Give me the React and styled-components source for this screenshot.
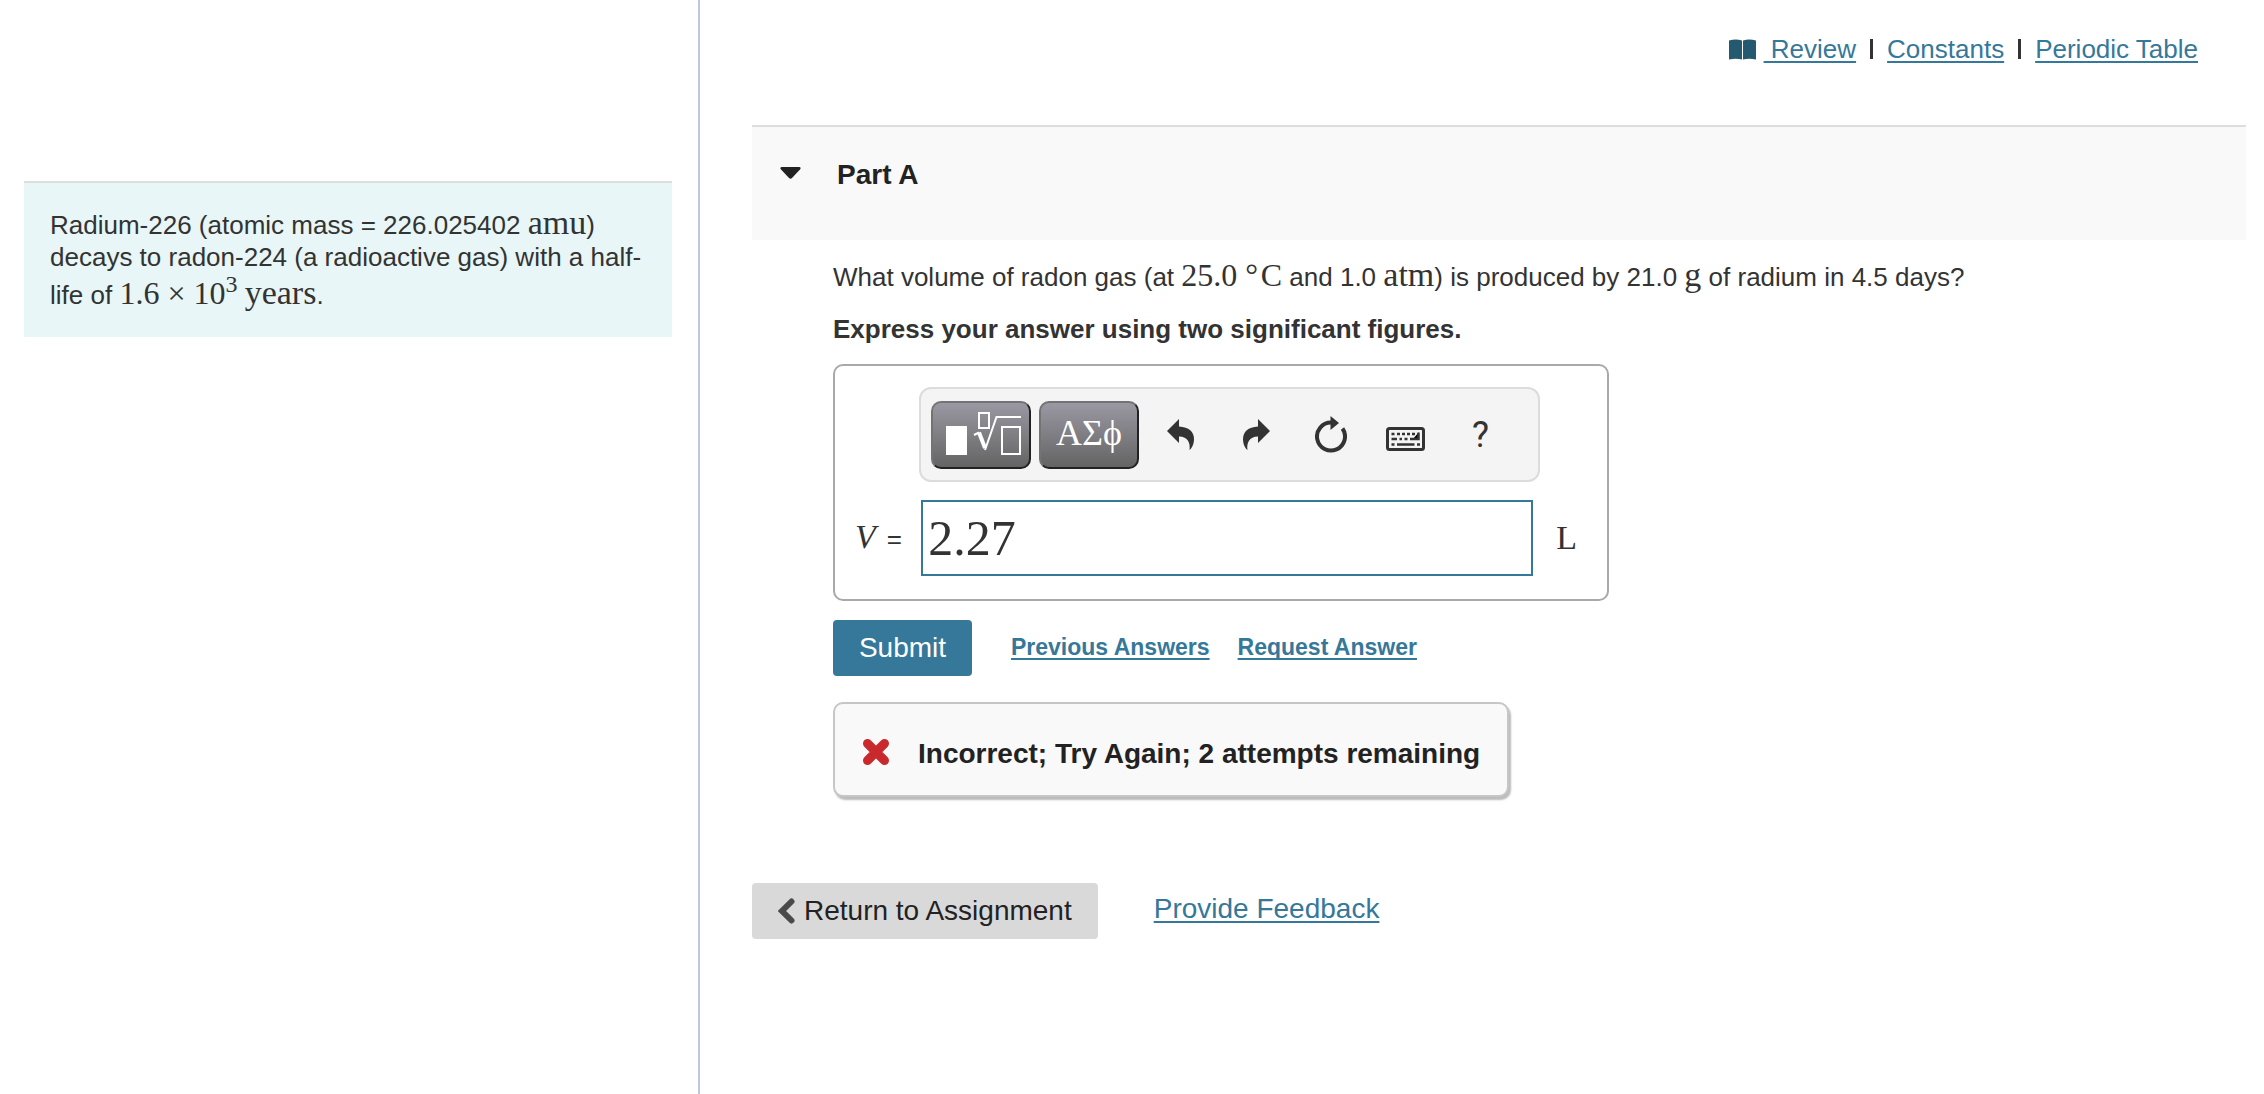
import React, { useState } from 'react';
import styled, { createGlobalStyle } from 'styled-components';

const GlobalStyle = createGlobalStyle`
  * {
    box-sizing: border-box;
  }
  body {
    margin: 0;
    background: #fff;
    color: #333;
    font-family: 'Liberation Sans', Arial, sans-serif;
    font-size: 26px;
    line-height: 32px;
  }
  button, input {
    font-family: inherit;
  }
`;

const Page = styled.div`
  display: grid;
  grid-template-columns: minmax(0, 700fr) minmax(0, 1564fr);
  min-height: 100vh;
`;

const Sidebar = styled.aside`
  padding: 181px 26px 0 24px;
  border-right: 2px solid #bccbdc;
`;

const Intro = styled.p`
  margin: 0;
  padding: 26px;
  border-top: 2px solid #dcdede;
  background: #e8f6f7;
`;

const IntroLine = styled.span`
  display: block;
  padding-top: ${props => (props.$tall ? 6 : 0)}px;
`;

const MathText = styled.span`
  font-family: 'Liberation Serif', 'Times New Roman', serif;
  font-size: ${props => (props.$unit ? 34 : 32)}px;
  line-height: 24px;
  white-space: nowrap;
  sup {
    font-size: 24px;
    line-height: 0;
  }
`;

const Main = styled.main`
  padding: 31px 18px 0 52px;
`;

const TopLinks = styled.nav`
  display: flex;
  justify-content: flex-end;
  align-items: center;
  gap: 14px;
  height: 36px;
  padding-right: 48px;
`;

const ReviewGroup = styled.span`
  display: flex;
  align-items: center;
  gap: 8px;
`;

const Link = styled.a`
  color: #35789a;
  font-size: ${props => props.$size || 26}px;
  font-weight: ${props => (props.$bold ? 'bold' : 'normal')};
  text-decoration: underline;
  text-decoration-thickness: 2px;
  text-underline-offset: 3px;
  text-decoration-skip-ink: none;
  white-space: pre;
`;

const Separator = styled.span`
  width: 3px;
  height: 20px;
  background: #333;
`;

const PartHeader = styled.header`
  display: flex;
  align-items: flex-start;
  gap: 36px;
  height: 115px;
  margin-top: 58px;
  padding: 32px 28px 0;
  border-top: 2px solid #dcdede;
  background: #f9f9f9;
`;

const Toggle = styled.button`
  display: flex;
  align-items: center;
  height: 28px;
  padding: 0;
  border: 0;
  background: none;
`;

const PartTitle = styled.h2`
  margin: 0;
  color: #222;
  font-size: 28px;
  line-height: 32px;
`;

const PartBody = styled.section`
  padding: 19px 0 0 81px;
`;

const Question = styled.p`
  margin: 0;
  line-height: 36px;
`;

const Instruction = styled.p`
  margin: 18px 0 19px;
  font-weight: bold;
`;

const AnswerBox = styled.div`
  width: 776px;
  max-width: 100%;
  padding: 21px 30px 23px 20px;
  border: 2px solid #a9a9a9;
  border-radius: 10px;
`;

const Toolbar = styled.div`
  display: flex;
  align-items: center;
  gap: 8px;
  width: 621px;
  height: 95px;
  margin-left: 64px;
  padding-left: 10px;
  border: 2px solid #dcdcdc;
  border-radius: 12px;
  background: #f4f4f4;
`;

const PaletteButton = styled.button`
  display: flex;
  align-items: center;
  justify-content: center;
  width: 100px;
  height: 68px;
  padding: 0 0 4px;
  border: 2px solid;
  border-color: #737373 #222 #222 #737373;
  border-radius: 10px;
  background: linear-gradient(#9a98a2, #646464);
  color: #fff;
  font-family: 'Liberation Serif', serif;
  font-size: 36px;
  line-height: 40px;
`;

const Tools = styled.div`
  display: flex;
  margin-left: -4px;
`;

const ToolButton = styled.button`
  display: flex;
  align-items: center;
  justify-content: center;
  width: 75px;
  height: 68px;
  padding: 0;
  border: 0;
  background: none;
  color: #333;
  font-family: Roboto, sans-serif;
  font-size: 36px;
`;

const EntryRow = styled.div`
  display: flex;
  align-items: center;
  margin-top: 18px;
`;

const Variable = styled.label`
  display: flex;
  align-items: baseline;
  gap: 11px;
  width: 67px;
  i {
    font-family: 'Liberation Serif', serif;
    font-size: 34px;
  }
`;

const AnswerInput = styled.input`
  width: 612px;
  height: 76px;
  padding: 0 5px;
  border: 2px solid #35789a;
  border-radius: 0;
  outline: none;
  color: #333;
  font-family: 'Liberation Serif', serif;
  font-size: 50px;
`;

const Unit = styled.span`
  margin-left: 23px;
  font-family: 'Liberation Serif', serif;
  font-size: 34px;
`;

const Actions = styled.div`
  display: flex;
  align-items: center;
  margin-top: 19px;
`;

const SubmitButton = styled.button`
  width: 139px;
  height: 56px;
  margin-right: 39px;
  padding: 0;
  border: 0;
  border-radius: 4px;
  background: #35789a;
  color: #fff;
  font-size: 28px;
`;

const AnswerLinks = styled.div`
  display: flex;
  gap: 28px;
  padding-bottom: 2px;
`;

const Feedback = styled.div`
  display: inline-flex;
  align-items: center;
  gap: 28px;
  height: 95px;
  margin-top: 26px;
  padding: 8px 27px 0 27px;
  border: 2px solid #c6c6c6;
  border-radius: 10px;
  background: #f9f9f9;
  box-shadow: 2px 3px 2px #bbb;
  color: #222;
  font-size: 28px;
  font-weight: bold;
  svg {
    margin-bottom: 4px;
  }
`;

const Footer = styled.footer`
  display: flex;
  align-items: center;
  gap: 56px;
  margin-top: 86px;
`;

const FooterLink = styled(Link)`
  padding-bottom: 4px;
`;

const ReturnButton = styled.button`
  display: flex;
  align-items: center;
  gap: 9px;
  height: 56px;
  padding: 0 26px;
  border: 0;
  border-radius: 4px;
  background: #d9d9d9;
  color: #222;
  font-size: 28px;
`;

const BookIcon = () => (
  <svg width="27" height="21" viewBox="0 0 27 21" fill="#24596f" aria-hidden="true">
    <path d="M0 1.500Q7-0.500 13 1.500V20.500Q7 19 0 20.500Z" />
    <path d="M14 1.500Q20-0.500 27 1.500V20.500Q20 19 14 20.500Z" />
  </svg>
);

const CaretIcon = () => (
  <svg width="21" height="12" viewBox="0 0 21 12" fill="#222" aria-hidden="true">
    <path d="M1.500 0H19.500Q21.500 0.500 20 2.500L12 11Q10.500 12.500 9 11L1 2.500Q-0.500 0.500 1.500 0Z" />
  </svg>
);

const TemplateIcon = () => (
  <svg width="80" height="44" viewBox="0 0 80 44" fill="none" stroke="#fff" strokeWidth="2" aria-hidden="true">
    <path d="M5 15H26V44H5Z" fill="#fff" stroke="none" />
    <path d="M38 2H48V17H38ZM61 16H79V43H61Z" />
    <path d="M33 24L38 21.500" />
    <path d="M38 21.500L44 37" strokeWidth="4" />
    <path d="M44 39L55.500 6H80" />
  </svg>
);

const ArrowIcon = ({ flip }) => (
  <svg width="28" height="32" viewBox="0 0 28 32" fill="#333" aria-hidden="true">
    <path
      d="M0 12L12 0V7.500C22 8 27 13 27 20C27 25 25 29 22.500 31C23.500 24 21 17.500 12 17.500V24Z"
      transform={flip ? 'translate(28 0) scale(-1 1)' : undefined}
    />
  </svg>
);

const ResetIcon = () => (
  <svg width="32" height="37" viewBox="0 0 32 37" aria-hidden="true">
    <path d="M16 6.500A14 14 0 1 0 27.500 12.500" fill="none" stroke="#333" strokeWidth="4" />
    <path d="M15.500 0L24 7L15.500 14Z" fill="#333" />
  </svg>
);

const KeyboardIcon = () => (
  <svg width="39" height="32" viewBox="0 -8 39 32" aria-hidden="true">
    <rect x="1.500" y="1.500" width="36" height="21" rx="2" fill="none" stroke="#333" strokeWidth="3" />
    <g stroke="#333" strokeWidth="2.500">
      <path d="M5.500 7H8.500M11 7H14M16 7H19M21 7H24M26 7H29" />
      <path d="M5.500 12H11M13.500 12H16M18.500 12H21.500M24 12H27" />
      <path d="M5.500 17.500H8.500M11 17.500H28.500M31 17.500H34M32.500 5.500V12H27" />
    </g>
  </svg>
);

const WrongIcon = () => (
  <svg width="28" height="28" viewBox="0 0 28 28" aria-hidden="true">
    <path d="M5.500 5.500L22.500 22.500M22.500 5.500L5.500 22.500" stroke="#c9282d" strokeWidth="9" strokeLinecap="round" />
  </svg>
);

const ChevronIcon = () => (
  <svg width="17" height="26" viewBox="0 0 17 26" aria-hidden="true">
    <path d="M13.500 3.500L4 13L13.500 22.500" fill="none" stroke="#4a4a4a" strokeWidth="6" strokeLinecap="round" />
  </svg>
);

const App = () => {
  const [answer, setAnswer] = useState('2.27');

  return (
    <>
      <GlobalStyle />
      <Page>
        <Sidebar>
          <Intro>
            <IntroLine>
              Radium-226 (atomic mass = 226.025402 <MathText $unit>amu</MathText>)
            </IntroLine>
            <IntroLine>decays to radon-224 (a radioactive gas) with a half-</IntroLine>
            <IntroLine $tall>
              life of <MathText>1.6 × 10<sup>3</sup></MathText> <MathText $unit>years</MathText>.
            </IntroLine>
          </Intro>
        </Sidebar>
        <Main>
          <TopLinks>
            <ReviewGroup>
              <BookIcon />
              <Link href="#review"> Review</Link>
            </ReviewGroup>
            <Separator />
            <Link href="#constants">Constants</Link>
            <Separator />
            <Link href="#periodic-table">Periodic Table</Link>
          </TopLinks>
          <PartHeader>
            <Toggle type="button" aria-label="Collapse Part A">
              <CaretIcon />
            </Toggle>
            <PartTitle>Part A</PartTitle>
          </PartHeader>
          <PartBody>
            <Question>
              What volume of radon gas (at <MathText>25.0 °&#8202;C</MathText> and
              1.0 <MathText $unit>atm</MathText>) is produced by 21.0 <MathText $unit>g</MathText> of
              radium in 4.5 days?
            </Question>
            <Instruction>Express your answer using two significant figures.</Instruction>
            <AnswerBox>
              <Toolbar>
                <PaletteButton type="button" aria-label="Templates">
                  <TemplateIcon />
                </PaletteButton>
                <PaletteButton type="button">ΑΣϕ</PaletteButton>
                <Tools>
                  <ToolButton type="button" aria-label="Undo"><ArrowIcon /></ToolButton>
                  <ToolButton type="button" aria-label="Redo"><ArrowIcon flip /></ToolButton>
                  <ToolButton type="button" aria-label="Reset"><ResetIcon /></ToolButton>
                  <ToolButton type="button" aria-label="Keyboard shortcuts"><KeyboardIcon /></ToolButton>
                  <ToolButton type="button">?</ToolButton>
                </Tools>
              </Toolbar>
              <EntryRow>
                <Variable htmlFor="answer"><i>V</i> =</Variable>
                <AnswerInput id="answer" value={answer} onChange={e => setAnswer(e.target.value)} />
                <Unit>L</Unit>
              </EntryRow>
            </AnswerBox>
            <Actions>
              <SubmitButton type="button">Submit</SubmitButton>
              <AnswerLinks>
                <Link href="#previous" $size={23} $bold>Previous Answers</Link>
                <Link href="#request" $size={23} $bold>Request Answer</Link>
              </AnswerLinks>
            </Actions>
            <Feedback role="status">
              <WrongIcon />
              Incorrect; Try Again; 2 attempts remaining
            </Feedback>
          </PartBody>
          <Footer>
            <ReturnButton type="button">
              <ChevronIcon />
              Return to Assignment
            </ReturnButton>
            <FooterLink href="#feedback" $size={28}>Provide Feedback</FooterLink>
          </Footer>
        </Main>
      </Page>
    </>
  );
};

export default App;
